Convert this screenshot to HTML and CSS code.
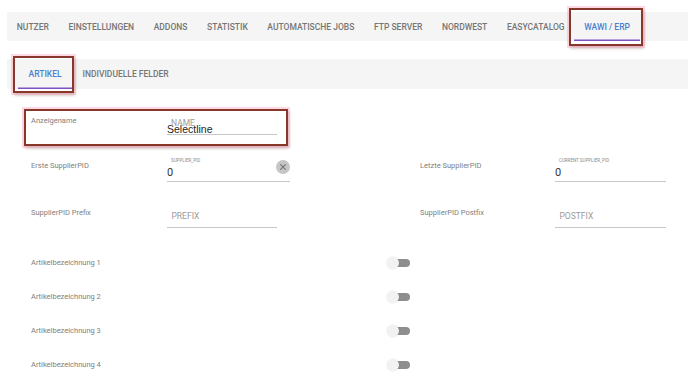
FILE: index.html
```html
<!DOCTYPE html>
<html lang="de">
<head>
<meta charset="utf-8">
<title>WAWI / ERP</title>
<link rel="stylesheet" href="styles.css">
</head>
<body>
<div class="page">
  <nav class="tabs">
    <span class="tab">NUTZER</span>
    <span class="tab">EINSTELLUNGEN</span>
    <span class="tab">ADDONS</span>
    <span class="tab">STATISTIK</span>
    <span class="tab">AUTOMATISCHE JOBS</span>
    <span class="tab">FTP SERVER</span>
    <span class="tab">NORDWEST</span>
    <span class="tab">EASYCATALOG</span>
    <span class="tab active marked">WAWI / ERP</span>
  </nav>
  <nav class="subtabs">
    <span class="subtab active marked">ARTIKEL</span>
    <span class="subtab">INDIVIDUELLE FELDER</span>
  </nav>

  <div class="form">
    <div class="row row-name marked">
      <div class="label">Anzeigename</div>
      <div class="field field-short">
        <span class="float">NAME</span>
        <span class="value value-sel">Selectline</span>
      </div>
    </div>

    <div class="row row-pid">
      <div class="label">Erste SupplierPID</div>
      <div class="field">
        <span class="float tiny">SUPPLIER_PID</span>
        <span class="value value-num">0</span>
        <span class="clear">
          <svg width="14" height="14" viewBox="0 0 14 14"><circle cx="7" cy="7" r="7" fill="#c6c6c6"/><path d="M4.6 4.6 L9.4 9.4 M9.4 4.6 L4.6 9.4" stroke="#777" stroke-width="1.2" stroke-linecap="round"/></svg>
        </span>
      </div>
      <div></div>
      <div class="label">Letzte SupplierPID</div>
      <div class="field">
        <span class="float tiny">CURRENT SUPPLIER_PID</span>
        <span class="value value-num">0</span>
      </div>
    </div>

    <div class="row row-fix">
      <div class="label">SupplierPID Prefix</div>
      <div class="field field-short">
        <span class="value placeholder">PREFIX</span>
      </div>
      <div></div>
      <div class="label">SupplierPID Postfix</div>
      <div class="field">
        <span class="value placeholder">POSTFIX</span>
      </div>
    </div>

    <div class="toggles">
      <div class="toggle-row">
        <div class="label">Artikelbezeichnung 1</div>
        <div class="switch"><span class="knob"></span><span class="track"></span></div>
      </div>
      <div class="toggle-row">
        <div class="label">Artikelbezeichnung 2</div>
        <div class="switch"><span class="knob"></span><span class="track"></span></div>
      </div>
      <div class="toggle-row">
        <div class="label">Artikelbezeichnung 3</div>
        <div class="switch"><span class="knob"></span><span class="track"></span></div>
      </div>
      <div class="toggle-row">
        <div class="label">Artikelbezeichnung 4</div>
        <div class="switch"><span class="knob"></span><span class="track"></span></div>
      </div>
    </div>
  </div>
</div>
</body>
</html>
```

FILE: styles.css
```css
* { box-sizing: border-box; }
html, body { margin: 0; background: #fff; }
body {
  width: 688px;
  height: 385px;
  overflow: hidden;
  font-family: Roboto, "Noto Sans", "Liberation Sans", sans-serif;
  color: #707070;
}
.page { padding-top: 12px; }

/* main tabs */
.tabs {
  display: flex;
  height: 29px;
  margin-left: 7px;
  background: #f5f5f5;
}
.tab {
  position: relative;
  display: flex;
  align-items: center;
  padding: 0 9.8px;
  font-size: 8.5px;
  font-weight: 500;
  color: #767676;
  white-space: nowrap;
}
.tab.active, .subtab.active {
  color: #4b7fd1;
  box-shadow: inset 0 -1.5px 0 #7b53c6;
}

/* highlight annotations */
.marked::after {
  content: "";
  position: absolute;
  border: 2px solid #86382a;
  box-shadow: 0 0 0 2px rgba(255, 170, 195, 0.45), 1px 2px 3px rgba(60, 20, 10, 0.35);
  pointer-events: none;
}
.tab.marked::after { top: -4px; bottom: -5px; left: -5.5px; right: -3px; }

/* sub tabs */
.subtabs {
  display: flex;
  height: 30px;
  margin: 18px 0 0 7px;
  padding-left: 11px;
  background: #f5f5f5;
}
.subtab {
  position: relative;
  display: flex;
  align-items: center;
  padding: 0 10.5px;
  font-size: 8.5px;
  font-weight: 500;
  color: #767676;
  white-space: nowrap;
}
.subtab.marked::after { top: -3px; bottom: -4px; left: -5px; right: -2px; }

/* form */
.form { padding-top: 20px; }
.row {
  position: relative;
  display: grid;
  grid-template-columns: 136px 123px 130px 135px 111px;
  align-items: start;
  padding-left: 31px;
}
.label {
  font-size: 7.5px;
  line-height: 10px;
  color: #808080;
  white-space: nowrap;
}
.field {
  position: relative;
  display: flex;
  align-items: flex-end;
  border-bottom: 1px solid #c8c8c8;
}
.field-short { width: 110px; }
.float {
  position: absolute;
  left: 4px;
  top: 8px;
  font-size: 8.5px;
  line-height: 10px;
  color: #9a9a9a;
}
.float.tiny {
  top: 3px;
  font-size: 4.5px;
  line-height: 5px;
  color: #8a8a8a;
}
.value { flex: 1; }
.value-sel {
  font-family: "Liberation Sans", Arial, sans-serif;
  font-size: 10.5px;
  line-height: 9px;
  color: #1e1e1e;
}
.value-num {
  font-size: 11px;
  line-height: 13px;
  padding-bottom: 2px;
  color: #333;
}
.placeholder {
  font-size: 8.5px;
  line-height: 12px;
  padding: 0 0 5px 4.5px;
  color: #9a9a9a;
}
.clear { display: flex; margin-bottom: 7px; }

.row-name { height: 32px; }
.row-name > .label { margin-top: 7px; }
.row-name > .field { margin-top: 1px; height: 25px; }
.row-name.marked::after { top: 0; left: 24px; width: 260px; height: 33px; }

.row-pid { height: 47px; }
.row-pid > .label { margin-top: 20px; }
.row-pid > .field { margin-top: 14px; height: 27px; }

.row-fix { height: 45px; }
.row-fix > .label { margin-top: 20px; }
.row-fix > .field { margin-top: 12px; height: 28px; }

/* toggles */
.toggles { margin-top: 13px; }
.toggle-row {
  display: grid;
  grid-template-columns: 356px auto;
  align-items: center;
  height: 34px;
  padding-left: 31px;
}
.switch { display: flex; align-items: center; }
.knob {
  position: relative;
  z-index: 1;
  width: 12px;
  height: 12px;
  border-radius: 50%;
  background: #f2f2f2;
  box-shadow: 0 0 2px rgba(0, 0, 0, 0.12);
}
.track {
  width: 17px;
  height: 8px;
  margin-left: -6px;
  border-radius: 0 4px 4px 0;
  background: #8e8e8e;
}
```
